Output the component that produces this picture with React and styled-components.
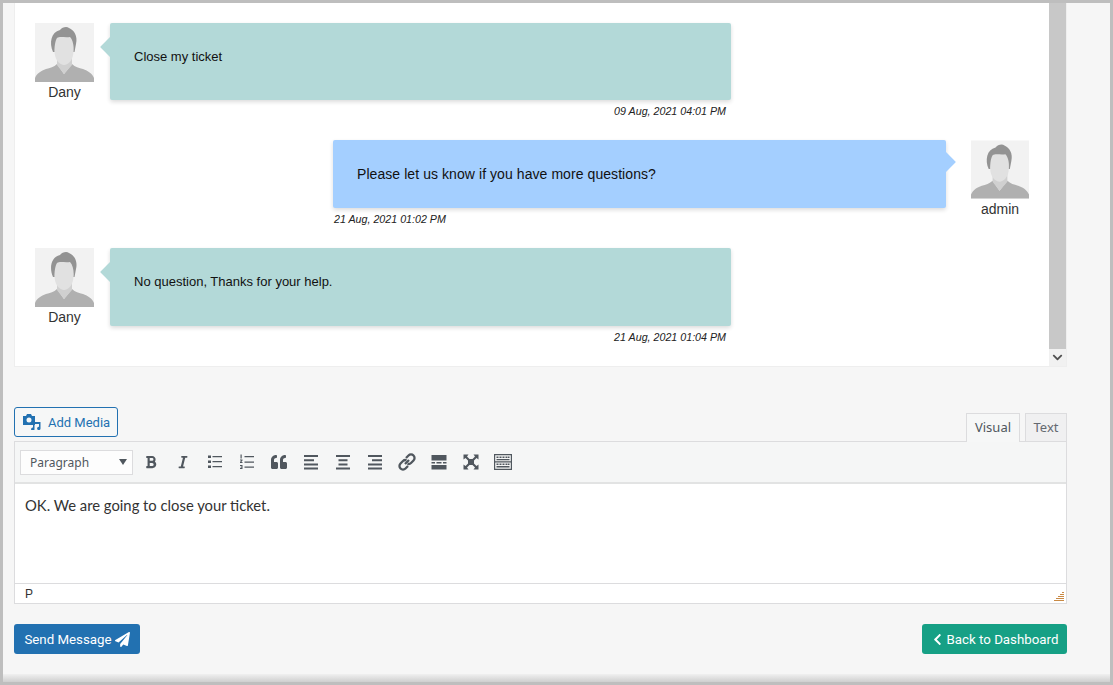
import React from "react";
import styled, { createGlobalStyle } from "styled-components";
import { FaPaperPlane, FaChevronLeft, FaChevronDown, FaBold, FaItalic, FaQuoteLeft } from "react-icons/fa";

const GlobalStyle = createGlobalStyle`
  html, body {
    margin: 0;
    padding: 0;
    height: 685px;
    overflow: hidden;
    font-family: "Liberation Sans", Arial, sans-serif;
  }
  * {
    box-sizing: border-box;
  }
`;

const Frame = styled.div`
  height: 685px;
  border: 3px solid #bebebe;
  background: #f6f6f6;
  display: flex;
  flex-direction: column;
  padding: 0 43px 0 11px;
`;

const ChatPanel = styled.div`
  display: flex;
  background: #fff;
  border: 1px solid #eee;
  border-top: 0;
  height: 364px;
`;

const MessageList = styled.div`
  flex: 1;
  padding: 20px 20px 0 20px;
`;

const Row = styled.div`
  display: flex;
  justify-content: ${(p) => (p.$mine ? "flex-end" : "flex-start")};
  gap: ${(p) => (p.$mine ? "25px" : "16px")};
  height: ${(p) => p.$height}px;
`;

const Person = styled.div`
  width: ${(p) => (p.$mine ? 58 : 59)}px;
  font-size: 14px;
  line-height: 20px;
  color: #333;
  text-align: center;
`;

const AvatarSvg = styled.svg`
  display: block;
  width: 100%;
  height: 59px;
`;

const MessageBody = styled.div`
  width: ${(p) => (p.$mine ? 613 : 621)}px;
`;

const Bubble = styled.div`
  position: relative;
  background: ${(p) => (p.$mine ? "#a4cfff" : "#b3d9d8")};
  min-height: ${(p) => p.$minHeight}px;
  padding: 24px;
  font-size: ${(p) => (p.$mine ? 14 : 13)}px;
  letter-spacing: ${(p) => (p.$mine ? "0.07px" : "0")};
  line-height: 20px;
  color: #111;
  border-radius: 2px;
  box-shadow: 0 2px 4px rgba(0, 0, 0, 0.14);

  &::before {
    content: "";
    position: absolute;
    top: ${(p) => (p.$mine ? 15 : 17)}px;
    ${(p) => (p.$mine ? "right: -7px;" : "left: -7px;")}
    width: 14px;
    height: 14px;
    background: ${(p) => (p.$mine ? "#a4cfff" : "#b3d9d8")};
    transform: rotate(45deg);
  }
`;

const Time = styled.div`
  font-size: 10.7px;
  font-style: italic;
  line-height: 12px;
  color: #222;
  margin-top: 5px;
  text-align: ${(p) => (p.$mine ? "left" : "right")};
  padding: ${(p) => (p.$mine ? "0 0 0 1px" : "0 5px 0 0")};
`;

const Scrollbar = styled.div`
  width: 17px;
  display: flex;
  flex-direction: column;
  background: #f1f1f1;
`;

const Thumb = styled.div`
  flex: 1;
  background: #c8c8c8;
`;

const ScrollArrow = styled.div`
  height: 17px;
  display: flex;
  align-items: center;
  justify-content: center;
  color: #505050;
  font-size: 11px;
`;

const EditorHead = styled.div`
  display: flex;
  justify-content: space-between;
  margin-top: 40px;
  height: 35px;
`;

const MediaButton = styled.button`
  height: 30px;
  width: 104px;
  display: flex;
  align-items: center;
  gap: 7px;
  padding: 0 0 0 8px;
  background: #f6f7f7;
  border: 1px solid #2271b1;
  border-radius: 3px;
  color: #2271b1;
  font-family: Roboto, "Noto Sans", sans-serif;
  font-size: 13px;
`;

const Tabs = styled.div`
  display: flex;
  align-items: flex-end;
  gap: 5px;
`;

const Tab = styled.div`
  height: 29px;
  width: ${(p) => (p.$active ? 54 : 42)}px;
  display: flex;
  align-items: center;
  justify-content: center;
  padding-bottom: 2px;
  border: 1px solid #dcdcde;
  border-bottom: ${(p) => (p.$active ? "0" : "1px solid #dcdcde")};
  background: ${(p) => (p.$active ? "#f6f7f7" : "#f0f0f1")};
  color: ${(p) => (p.$active ? "#50575e" : "#646970")};
  font-family: "Noto Sans", "Open Sans", sans-serif;
  font-size: 13px;
  position: relative;
  z-index: 1;
`;

const Editor = styled.div`
  border: 1px solid #dcdcde;
  margin-top: -1px;
  background: #fff;
`;

const Toolbar = styled.div`
  height: 42px;
  display: flex;
  align-items: center;
  padding: 0 0 0 5px;
  background: #f5f6f6;
  border-bottom: 2px solid #e2e3e3;
`;

const FormatSelect = styled.div`
  width: 113px;
  height: 25px;
  display: flex;
  align-items: center;
  justify-content: space-between;
  padding: 0 3px 0 9px;
  margin-right: 2px;
  background: #fdfdfd;
  border: 1px solid #dcdcde;
  color: #50575e;
  font-family: "Noto Sans", "Open Sans", sans-serif;
  font-size: 12px;

  &::after {
    content: "";
    border-style: solid;
    border-width: 6px 4px 0;
    border-color: #50575e transparent transparent;
    margin-right: 2px;
  }
`;

const ToolButton = styled.div`
  width: 32px;
  height: 26px;
  display: flex;
  align-items: center;
  justify-content: center;
  color: #50575e;
`;

const ToolSvg = styled.svg`
  width: 20px;
  height: 20px;
  fill: #50575e;
`;

const EditArea = styled.div`
  height: 99px;
  padding: 10px 10px;
  font-family: Lato, "Noto Sans", sans-serif;
  font-size: 14.8px;
  line-height: 22px;
  color: #333;
`;

const StatusBar = styled.div`
  height: 20px;
  position: relative;
  border-top: 1px solid #dcdcde;
  padding: 0 10px;
  font-size: 12px;
  line-height: 20px;
  color: #333;
`;

const Grip = styled.svg`
  position: absolute;
  right: 2px;
  bottom: 2px;
  width: 10px;
  height: 10px;
`;

const ActionRow = styled.div`
  display: flex;
  justify-content: space-between;
  margin-top: 20px;
`;

const ActionButton = styled.button`
  height: 30px;
  width: ${(p) => p.$width}px;
  display: flex;
  align-items: center;
  justify-content: center;
  gap: 3px;
  padding: 0;
  border: 0;
  border-radius: 3px;
  background: ${(p) => p.$bg};
  color: #fff;
  font-family: Roboto, "Liberation Sans", sans-serif;
  font-size: 13.3px;
`;

const BottomShade = styled.div`
  height: 8px;
  margin: auto -43px 0 -11px;
  background: linear-gradient(#f0f0f0, #cfcfcf);
`;

const Avatar = () => (
  <AvatarSvg viewBox="0 0 59 59" aria-hidden="true">
    <rect width="59" height="59" fill="#f2f2f2" />
    <path
      d="M0 59 L0 55 C2 50 6 48 11 46 C15 45 19 44 22 41 L29 51 L37 41 C40 44 44 45 48 46 C53 48 57 50 59 55 L59 59 Z"
      fill="#b0b0b0"
    />
    <path d="M22 34 L22 42 L29 51 L37 42 L37 34 Z" fill="#d0d0d0" />
    <path
      d="M19.500 18 C19.500 12 24 11 29 11 C34 11 38.500 12 38.500 18 L38.500 28 C38.500 37 33 42 29 42 C25 42 19.500 37 19.500 28 Z"
      fill="#e1e1e1"
    />
    <path
      d="M18 29 C14 20 16 9 25 7 C27 4 32 3 34 5 C39 7 43 13 41 21 L39.500 29 L38.500 29 C39 23 38 17 35 14 C30 15 25 13 22 15 C20 18 19.500 24 19.500 29 Z"
      fill="#939393"
    />
  </AvatarSvg>
);

const messages = [
  { id: 1, name: "Dany", text: "Close my ticket", time: "09 Aug, 2021 04:01 PM", height: 117, bubble: 77 },
  { id: 2, name: "admin", text: "Please let us know if you have more questions?", time: "21 Aug, 2021 01:02 PM", height: 108, bubble: 68, mine: true },
  { id: 3, name: "Dany", text: "No question, Thanks for your help.", time: "21 Aug, 2021 01:04 PM", height: 118, bubble: 78 },
];

const tools = [
  <FaBold key="b" size={14} />,
  <FaItalic key="i" size={14} />,
  <ToolSvg key="ul" viewBox="0 0 20 20">
    <path d="M3 3.500h3V6H3zM3 8.500h3V11H3zM3 13.500h3V16H3zM7.500 4h9.500v1.200H7.500zM7.500 9h9.500v1.200H7.500zM7.500 14h9.500v1.200H7.500z" />
  </ToolSvg>,
  <ToolSvg key="ol" viewBox="0 0 20 20">
    <path d="M7.500 4h9.500v1.200H7.500zM7.500 9.500h9.500v1.200H7.500zM7.500 14.500h9.500v1.200H7.500zM3.500 2.500h1.200v4H3.500zM3 7.500h2.500v1l-1.200 1.500h1.200v1H3v-1l1.300-1.500H3zM3 13h2.500v4H3v-1h1.500v-.5H3.500v-.8h1v-.7H3z" />
  </ToolSvg>,
  <FaQuoteLeft key="q" size={16} />,
  <ToolSvg key="al" viewBox="0 0 20 20">
    <path d="M3 3h14v2H3zM3 7.200h10v2H3zM3 11.400h14v2H3zM3 15.500h14v2H3z" />
  </ToolSvg>,
  <ToolSvg key="ac" viewBox="0 0 20 20">
    <path d="M3 3h14v2H3zM5.500 7.200h9v2h-9zM5.500 11.400h9v2h-9zM3 15.500h14v2H3z" />
  </ToolSvg>,
  <ToolSvg key="ar" viewBox="0 0 20 20">
    <path d="M3 3h14v2H3zM7 7.200h10v2H7zM3 11.400h14v2H3zM3 15.500h14v2H3z" />
  </ToolSvg>,
  <ToolSvg key="ln" viewBox="0 0 20 20">
    <path
      d="M8 12l4-4M9 6l2.500-2.500a3.300 3.300 0 0 1 5 5L14 11a3.300 3.300 0 0 1-3.500.8M11 14l-2.500 2.500a3.300 3.300 0 0 1-5-5L6 9a3.300 3.300 0 0 1 3.500-.8"
      fill="none"
      stroke="#50575e"
      strokeWidth="2.300"
    />
  </ToolSvg>,
  <ToolSvg key="hr" viewBox="0 0 20 20">
    <path d="M2.500 3h15v5.500h-15zM2.500 10h3.500v1.400H2.500zM7.500 10h5v1.400h-5zM14 10h3.500v1.400H14zM2.500 13h15v4.500h-15z" />
  </ToolSvg>,
  <ToolSvg key="fs" viewBox="0 0 20 20">
    <path d="M7 7h6v6H7zM2.500 2.500h5L6 4.500 8.500 7 7 8.500 4.500 6l-2 1.500zM17.500 2.500v5l-2-1.500L13 8.500 11.500 7 14 4.500 12.500 2.500zM2.500 17.500v-5l2 1.500L7 11.500 8.500 13 6 15.500l1.500 2zM17.500 17.500h-5l1.500-2-2.500-2.500 1.500-1.500 2.500 2.500 2-1.500z" />
  </ToolSvg>,
  <ToolSvg key="kb" viewBox="0 0 20 20">
    <path
      fillRule="evenodd"
      d="M1 2h18v16H1zM2.200 3.200v6h15.600v-6zM2.200 10.500v6.300h15.600v-6.300zM3.500 4.500h2v1.500h-2zM6.500 4.500h2v1.500h-2zM9.500 4.500h2v1.500h-2zM12.500 4.500h2v1.500h-2zM15 4.500h1.500v1.500H15zM3.500 7h13v1.200h-13zM3.500 11.500h2V13h-2zM6.500 11.500h2V13h-2zM9.500 11.500h2V13h-2zM12.500 11.500h2V13h-2zM15 11.500h1.500V13H15zM3.500 14h13v1.500h-13z"
    />
  </ToolSvg>,
];

const App = () => {
  return (
    <>
      <GlobalStyle />
      <Frame>
        <ChatPanel>
          <MessageList>
            {messages.map((m) => {
              const person = (
                <Person $mine={m.mine}>
                  <Avatar />
                  {m.name}
                </Person>
              );
              return (
                <Row key={m.id} $mine={m.mine} $height={m.height}>
                  {!m.mine && person}
                  <MessageBody $mine={m.mine}>
                    <Bubble $mine={m.mine} $minHeight={m.bubble}>{m.text}</Bubble>
                    <Time $mine={m.mine}>{m.time}</Time>
                  </MessageBody>
                  {m.mine && person}
                </Row>
              );
            })}
          </MessageList>
          <Scrollbar>
            <Thumb />
            <ScrollArrow>
              <FaChevronDown />
            </ScrollArrow>
          </Scrollbar>
        </ChatPanel>

        <EditorHead>
          <MediaButton>
            <svg width="18" height="16" viewBox="0 0 18 16" fill="#2271b1">
              <path
                fillRule="evenodd"
                d="M0 2h3l1-2h4l1 2h3v9H0zM6 3.500a2.500 2.500 0 1 0 0 5 2.500 2.500 0 0 0 0-5z"
              />
              <path d="M10 8h7.500v6.300a1.700 1.700 0 1 1-1.500-1.600V10h-4.500v5a1.700 1.700 0 1 1-1.500-1.600z" />
            </svg>
            Add Media
          </MediaButton>
          <Tabs>
            <Tab $active>Visual</Tab>
            <Tab>Text</Tab>
          </Tabs>
        </EditorHead>

        <Editor>
          <Toolbar>
            <FormatSelect>Paragraph</FormatSelect>
            {tools.map((tool) => (
              <ToolButton key={tool.key}>{tool}</ToolButton>
            ))}
          </Toolbar>
          <EditArea>OK. We are going to close your ticket.</EditArea>
          <StatusBar>
            P
            <Grip viewBox="0 0 10 10">
              <path
                d="M0 9.500h10M2 7.500h8M4 5.500h6M6 3.500h4M8 1.500h2"
                stroke="#c98a45"
                strokeWidth="1"
              />
            </Grip>
          </StatusBar>
        </Editor>

        <ActionRow>
          <ActionButton $bg="#2271b1" $width={126}>
            Send Message <FaPaperPlane size={15} />
          </ActionButton>
          <ActionButton $bg="#16a085" $width={145}>
            <FaChevronLeft size={13} /> Back to Dashboard
          </ActionButton>
        </ActionRow>

        <BottomShade />
      </Frame>
    </>
  );
};

export default App;
